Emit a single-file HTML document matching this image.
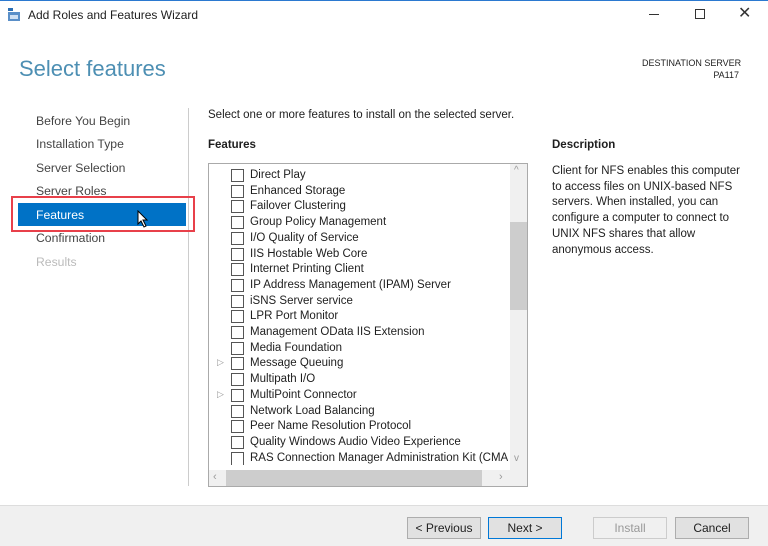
<!DOCTYPE html>
<html><head><style>
*{margin:0;padding:0;box-sizing:border-box}
body{width:768px;height:546px;position:relative;background:#fff;font-family:"Liberation Sans",sans-serif;font-size:11.5px;color:#1e1e1e;overflow:hidden}
.a{position:absolute;white-space:nowrap}
.nav{left:36px;color:#444;font-size:12.2px}
.row{left:250px;font-size:11.5px}
.cb{position:absolute;left:231px;width:13px;height:13px;border:1px solid #555;background:#fff}
.btn{position:absolute;top:517px;width:74px;height:22px;border:1px solid #adadad;background:#e1e1e1;text-align:center;line-height:20px;font-size:12px}
</style></head><body>
<div class="a" style="left:0;top:0;width:768px;height:1px;background:#2b79d0"></div>
<svg class="a" style="left:7px;top:8px" width="14" height="14"><rect x="1" y="0" width="5" height="3" fill="#2b6fb5"/><rect x="1" y="4" width="12" height="9" fill="#5a8fc8"/><rect x="3" y="7" width="8" height="4" fill="#cfe0f3"/></svg>
<div class="a" style="left:28px;top:8px;font-size:12px">Add Roles and Features Wizard</div>
<div class="a" style="left:649px;top:14px;width:10px;height:1px;background:#333"></div>
<div class="a" style="left:695px;top:9px;width:10px;height:10px;border:1px solid #333"></div>
<div class="a" style="left:738px;top:3px;font-size:16px;color:#333">✕</div>
<div class="a" style="left:19px;top:56px;font-size:22px;color:#4d8fb3">Select features</div>
<div class="a" style="left:642px;top:57px;font-size:9px;text-align:right;width:97px;line-height:12px">DESTINATION SERVER<br>PA117</div>
<div class="a" style="left:188px;top:108px;width:1px;height:378px;background:#ccc"></div>
<div class="a nav" style="top:114px">Before You Begin</div>
<div class="a nav" style="top:137px">Installation Type</div>
<div class="a nav" style="top:161px">Server Selection</div>
<div class="a nav" style="top:184px">Server Roles</div>
<div class="a" style="left:18px;top:203px;width:168px;height:23px;background:#0072c6"></div>
<div class="a nav" style="top:208px;color:#fff">Features</div>
<div class="a" style="left:11px;top:196px;width:184px;height:36px;border:2px solid #e8404a"></div>
<svg class="a" style="left:137px;top:210px" width="12" height="18"><path d="M1 1 L1 14 L4 11 L7 17 L9 16 L6 10 L10 10 Z" fill="#fff" stroke="#000"/></svg>
<div class="a nav" style="top:231px">Confirmation</div>
<div class="a nav" style="top:255px;color:#bbb">Results</div>
<div class="a" style="left:208px;top:109px">Select one or more features to install on the selected server.</div>
<div class="a" style="left:208px;top:139px;font-weight:bold">Features</div>
<div class="a" style="left:552px;top:139px;font-weight:bold">Description</div>
<div class="a" style="left:552px;top:164px;line-height:15.7px;white-space:normal;width:200px">Client for NFS enables this computer to access files on UNIX-based NFS servers. When installed, you can configure a computer to connect to UNIX NFS shares that allow anonymous access.</div>
<div class="a" style="left:208px;top:163px;width:320px;height:324px;border:1px solid #aaa;overflow:hidden"></div>
<div id="rows"></div>
<div class="a" style="left:510px;top:164px;width:17px;height:306px;background:#f0f0f0"></div>
<div class="a" style="left:510px;top:222px;width:17px;height:88px;background:#cdcdcd"></div>
<div class="a" style="left:514px;top:165px;color:#999;font-size:10px">^</div>
<div class="a" style="left:514px;top:453px;color:#999;font-size:10px">v</div>
<div class="a" style="left:209px;top:470px;width:318px;height:16px;background:#f0f0f0"></div>
<div class="a" style="left:226px;top:470px;width:256px;height:16px;background:#cdcdcd"></div>
<div class="a" style="left:213px;top:471px;color:#999;font-size:11px">‹</div>
<div class="a" style="left:499px;top:471px;color:#999;font-size:11px">›</div>
<div class="a" style="left:0;top:505px;width:768px;height:41px;background:#f0f0f0;border-top:1px solid #ddd"></div>
<div class="btn" style="left:407px">&lt; Previous</div>
<div class="btn" style="left:488px;border-color:#0078d7">Next &gt;</div>
<div class="btn" style="left:593px;background:#f0f0f0;border-color:#ccc;color:#999">Install</div>
<div class="btn" style="left:675px">Cancel</div>
<script>
var t=["Direct Play","Enhanced Storage","Failover Clustering","Group Policy Management","I/O Quality of Service","IIS Hostable Web Core","Internet Printing Client","IP Address Management (IPAM) Server","iSNS Server service","LPR Port Monitor","Management OData IIS Extension","Media Foundation","Message Queuing","Multipath I/O","MultiPoint Connector","Network Load Balancing","Peer Name Resolution Protocol","Quality Windows Audio Video Experience","RAS Connection Manager Administration Kit (CMA"];
var h="";t.forEach(function(s,i){var y=169+i*15.7;var hh=i==18?Math.min(13,468-y):13;
h+='<div class="cb" style="top:'+y+'px;height:'+hh+'px;'+(i==18?'border-bottom:none':'')+'"></div><div class="a row" style="top:'+(y)+'px;'+(i==18?'height:'+(470-y)+'px;overflow:hidden;width:258px':'')+'">'+s+'</div>';
if(i==12||i==14)h+='<div class="a" style="left:217px;top:'+(y)+'px;color:#999;font-size:9px">▷</div>';});
document.getElementById("rows").innerHTML=h;
</script>
</body></html>
